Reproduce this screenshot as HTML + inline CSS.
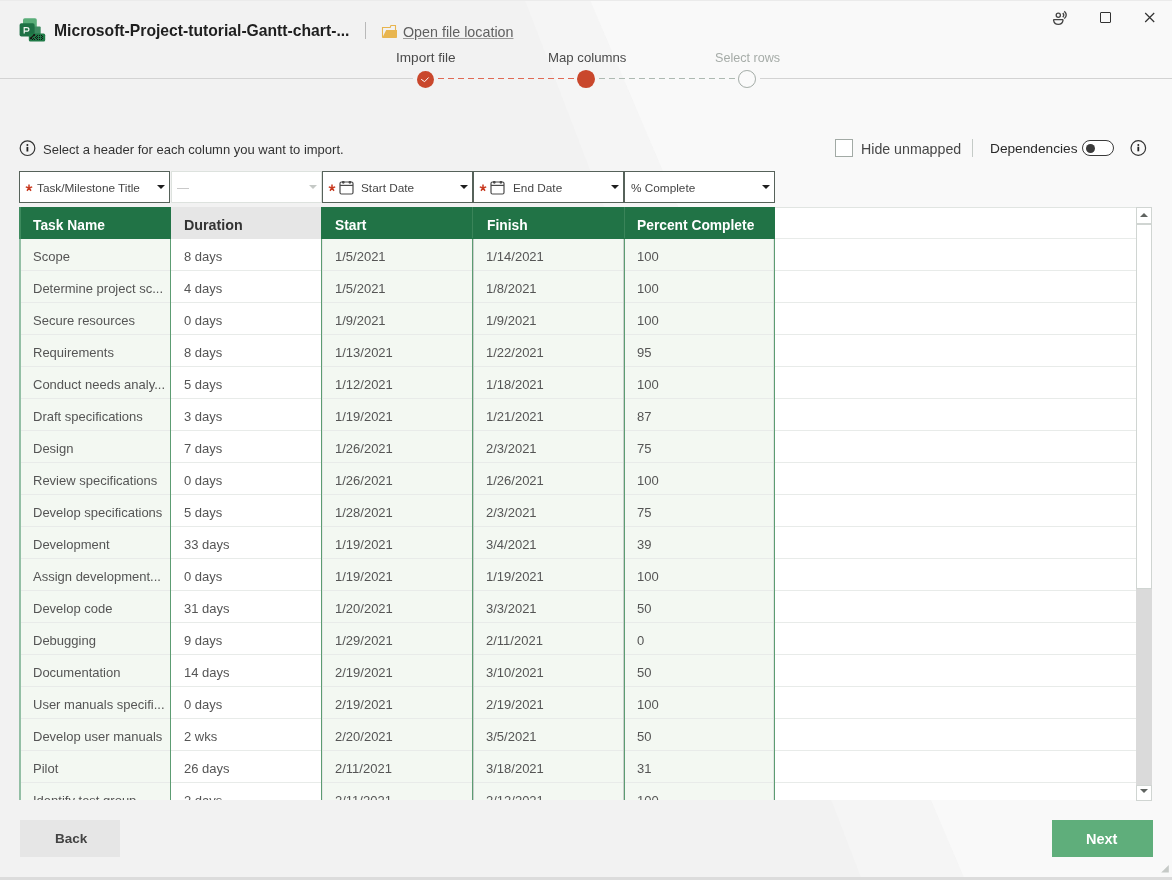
<!DOCTYPE html>
<html><head><meta charset="utf-8">
<style>
*{margin:0;padding:0;box-sizing:border-box}
html,body{width:1172px;height:880px;overflow:hidden}
body{position:relative;background:#f2f2f2;font-family:"Liberation Sans",sans-serif;color:#333}
.abs{position:absolute}
.tx{position:absolute;white-space:nowrap;line-height:1}
.step{position:absolute;font-size:13.2px;color:#4a4a4a;white-space:nowrap;line-height:1}
.dd{position:absolute;top:171px;height:32px;width:151px;background:#fff;border:1px solid #56625a}
.dd .lab{position:absolute;top:11px;font-size:11.8px;color:#454545;white-space:nowrap;line-height:1}
.dd .arr{position:absolute;left:136.5px;top:13px;width:0;height:0;border-left:4px solid transparent;border-right:4px solid transparent;border-top:4.5px solid #1e1e1e}
.ast{position:absolute;left:5px;top:11.5px}
#grid{position:absolute;left:19px;top:207px;width:1117px;height:593px;overflow:hidden;background:#fff}
.t{position:absolute;font-size:13px;color:#555;white-space:nowrap;line-height:1}
.rl{position:absolute;left:0;width:1118px;height:1px;background:#e8ebe9}
.hd{position:absolute;top:0;height:32px;font-size:13.8px;font-weight:bold;color:#fff;line-height:1;padding-top:12px;padding-left:14px;white-space:nowrap}
.vl{position:absolute;top:0;width:1px;height:594px;background:#5c9c72}
.tx,.t,.hd,.step,.lab{will-change:transform}
</style></head><body>
<svg class="abs" style="left:0;top:0" width="1172" height="880">
 <polygon points="525,0 590,0 965,880 862,880" fill="#f5f5f5"/>
 <polygon points="590,0 1172,0 1172,880 965,880" fill="#f9f9f9"/>
 <rect x="0" y="0" width="1172" height="1" fill="#ebebeb"/>
</svg>

<!-- app icon -->
<svg class="abs" style="left:19px;top:18px" width="27" height="25" viewBox="0 0 27 25">
 <rect x="4" y="0.2" width="13.8" height="12" rx="1.8" fill="#5aad79"/>
 <rect x="14.6" y="8.6" width="7.1" height="8" rx="1" fill="#3f8c62"/>
 <rect x="0.6" y="5.2" width="15" height="13.3" rx="1.8" fill="#1e7145"/>
 <path d="M5.2 15.6 V9.6 H7.6 Q9.9 9.6 9.9 11.4 Q9.9 13.2 7.6 13.2 H5.2" fill="none" stroke="#f2f7f3" stroke-width="1.2"/>
 <rect x="9.8" y="15.6" width="16.4" height="8" rx="1.6" fill="#1f7a47"/>
 <path d="M11.5 20.4 L15.2 16.9" stroke="#1a1010" stroke-width="1.3" fill="none"/>
 <rect x="14.4" y="16.1" width="1.7" height="1.7" fill="#1a1010"/>
 <rect x="11" y="19.6" width="1.6" height="1.6" fill="#1a1010"/>
 <g fill="#141414"><rect x="18.0" y="17.0" width="1" height="1"/><rect x="20.0" y="17.0" width="1" height="1"/><rect x="22.0" y="17.0" width="1" height="1"/><rect x="17.0" y="18.0" width="1" height="1"/><rect x="23.0" y="18.0" width="1" height="1"/><rect x="16.0" y="19.0" width="1" height="1"/><rect x="18.0" y="19.0" width="1" height="1"/><rect x="20.0" y="19.0" width="1" height="1"/><rect x="22.0" y="19.0" width="1" height="1"/><rect x="17.0" y="20.0" width="1" height="1"/><rect x="23.0" y="20.0" width="1" height="1"/><rect x="13.0" y="21.0" width="1" height="1"/><rect x="15.0" y="21.0" width="1" height="1"/><rect x="18.0" y="21.0" width="1" height="1"/><rect x="20.0" y="21.0" width="1" height="1"/><rect x="22.0" y="21.0" width="1" height="1"/><rect x="14.0" y="20.0" width="1" height="1"/><rect x="12.0" y="20.0" width="1" height="1"/></g>
</svg>
<div class="tx" style="left:54px;top:23px;font-size:15.7px;font-weight:bold;color:#1f1f1f">Microsoft-Project-tutorial-Gantt-chart-...</div>
<div class="abs" style="left:365px;top:22px;width:1px;height:17px;background:#b9b9b9"></div>
<!-- folder -->
<svg class="abs" style="left:376px;top:20px" width="28" height="22" viewBox="0 0 28 22">
 <path d="M6.5 17.5 V7.5 H14.2 L14.9 5.5 H19.5 V10.3" fill="none" stroke="#e8b54f" stroke-width="1.1"/>
 <path d="M10.2 10 H21 V17.6 L20.3 18 H6.2 Z" fill="#e8b54f"/>
</svg>
<div class="tx" style="left:403px;top:24.5px;font-size:14.3px;color:#606060;text-decoration:underline;text-decoration-color:#9a9a9a">Open file location</div>

<!-- window controls -->
<svg class="abs" style="left:1050px;top:8px" width="20" height="20" viewBox="0 0 20 20" fill="none" stroke="#444" stroke-width="1.3">
 <circle cx="8.3" cy="7.2" r="2.1"/>
 <path d="M3.9 11.7 H12.7 Q13.1 11.7 13 12.4 Q12.4 16.4 8.3 16.4 Q4.2 16.4 3.6 12.4 Q3.5 11.7 3.9 11.7 Z"/>
 <path d="M12.8 5 Q14.8 7.1 12.8 9.2"/><path d="M14.3 3.2 Q18.2 6.9 14.3 10.6"/>
</svg>
<div class="abs" style="left:1100px;top:12px;width:11px;height:11px;border:1.3px solid #333;border-radius:1px"></div>
<svg class="abs" style="left:1144px;top:12px" width="12" height="12" viewBox="0 0 12 12" stroke="#333" stroke-width="1.2"><path d="M1.2 1 L10.2 10 M10.2 1 L1.2 10"/></svg>

<!-- stepper -->
<div class="abs" style="left:0;top:78px;width:413px;height:1px;background:#d3d3d3"></div>
<div class="abs" style="left:760px;top:78px;width:412px;height:1px;background:#d3d3d3"></div>
<div class="step" style="left:396px;top:51px;font-size:13.6px">Import file</div>
<div class="step" style="left:548px;top:51px">Map columns</div>
<div class="step" style="left:715px;top:51.5px;font-size:12.6px;color:#a6aca8">Select rows</div>
<div class="abs" style="left:438px;top:78px;width:138px;height:1px;background:repeating-linear-gradient(90deg,#e06a55 0 6px,transparent 6px 10px)"></div>
<div class="abs" style="left:599px;top:78px;width:138px;height:1px;background:repeating-linear-gradient(90deg,#adb9b1 0 6px,transparent 6px 10px)"></div>
<div class="abs" style="left:416.5px;top:70.5px;width:17.5px;height:17.5px;border-radius:50%;background:#c9472c"></div>
<svg class="abs" style="left:416px;top:70px" width="18" height="18" viewBox="0 0 18 18"><path d="M5.2 9.3 L8.6 11.7 L12.6 7.5" stroke="#fff" stroke-width="1" fill="none"/></svg>
<div class="abs" style="left:577px;top:70.3px;width:17.8px;height:17.8px;border-radius:50%;background:#c9472c"></div>
<div class="abs" style="left:738px;top:70.3px;width:17.8px;height:17.8px;border-radius:50%;background:#fafafa;border:1.3px solid #a3aba6"></div>

<!-- info row -->
<svg class="abs" style="left:19px;top:140px" width="17" height="17" viewBox="0 0 17 17"><circle cx="8.5" cy="8.2" r="7.3" fill="none" stroke="#333" stroke-width="1.2"/><rect x="7.5" y="6.9" width="1.8" height="4.6" fill="#222"/><circle cx="8.4" cy="5.1" r="1" fill="#222"/></svg>
<div class="tx" style="left:43px;top:143px;font-size:13px;color:#333">Select a header for each column you want to import.</div>

<div class="abs" style="left:835px;top:139px;width:18px;height:18px;border:1px solid #a2aaa5;background:#fff"></div>
<div class="tx" style="left:861px;top:141.5px;font-size:14.2px;color:#464646">Hide unmapped</div>
<div class="abs" style="left:972px;top:139px;width:1px;height:18px;background:#c5cbc7"></div>
<div class="tx" style="left:990px;top:142px;font-size:13.7px;color:#2a2a2a">Dependencies</div>
<div class="abs" style="left:1082px;top:140px;width:32px;height:15.5px;border:1.3px solid #3a3a3a;border-radius:8px;background:#fff"></div>
<div class="abs" style="left:1085.7px;top:143.5px;width:9px;height:9px;border-radius:50%;background:#3a3a3a"></div>
<svg class="abs" style="left:1130px;top:140px" width="17" height="17" viewBox="0 0 17 17"><circle cx="8.3" cy="8" r="7.3" fill="none" stroke="#333" stroke-width="1.2"/><rect x="7.4" y="6.7" width="1.8" height="4.6" fill="#222"/><circle cx="8.3" cy="4.9" r="1" fill="#222"/></svg>

<!-- dropdowns -->
<div class="dd" style="left:19px"><svg class="ast" width="8" height="8" viewBox="0 0 8 8"><path d="M4 0.6 V4 M4 4 L0.8 2.9 M4 4 L7.2 2.9 M4 4 L2 6.8 M4 4 L6 6.8" stroke="#c8391f" stroke-width="1.5" fill="none"/></svg><span class="lab" style="left:17px">Task/Milestone Title</span><i class="arr"></i></div>
<div class="dd" style="left:171px;border-color:#dde2de"><span class="abs" style="left:5px;top:16px;width:12px;height:1px;background:#c9c9c9"></span><i class="arr" style="border-top-color:#c5c9c6"></i></div>
<div class="dd" style="left:322px"><svg class="ast" width="8" height="8" viewBox="0 0 8 8"><path d="M4 0.6 V4 M4 4 L0.8 2.9 M4 4 L7.2 2.9 M4 4 L2 6.8 M4 4 L6 6.8" stroke="#c8391f" stroke-width="1.5" fill="none"/></svg>
 <svg class="abs" style="left:16px;top:9px" width="15" height="14" viewBox="0 0 15 14" fill="none" stroke="#4a4a4a" stroke-width="1.2"><rect x="1" y="1" width="13" height="12" rx="1.5"/><path d="M1 4.4 H14"/><circle cx="4.3" cy="1.3" r=".8" fill="#4a4a4a"/><circle cx="10.9" cy="1.3" r=".8" fill="#4a4a4a"/></svg>
 <span class="lab" style="left:38px">Start Date</span><i class="arr"></i></div>
<div class="dd" style="left:473px"><svg class="ast" width="8" height="8" viewBox="0 0 8 8"><path d="M4 0.6 V4 M4 4 L0.8 2.9 M4 4 L7.2 2.9 M4 4 L2 6.8 M4 4 L6 6.8" stroke="#c8391f" stroke-width="1.5" fill="none"/></svg>
 <svg class="abs" style="left:16px;top:9px" width="15" height="14" viewBox="0 0 15 14" fill="none" stroke="#4a4a4a" stroke-width="1.2"><rect x="1" y="1" width="13" height="12" rx="1.5"/><path d="M1 4.4 H14"/><circle cx="4.3" cy="1.3" r=".8" fill="#4a4a4a"/><circle cx="10.9" cy="1.3" r=".8" fill="#4a4a4a"/></svg>
 <span class="lab" style="left:39px">End Date</span><i class="arr"></i></div>
<div class="dd" style="left:624px"><span class="lab" style="left:6px">% Complete</span><i class="arr"></i></div>

<!-- grid -->
<div id="grid">
 <div class="abs" style="left:0;top:0;width:1118px;height:1px;background:#e1e5e2"></div>
 <div class="abs" style="left:1px;top:0;width:151px;height:594px;background:#f3f8f2"></div>
 <div class="abs" style="left:303px;top:0;width:453px;height:594px;background:#f3f8f2"></div>
 <div class="rl" style="top:31px"></div>
<div class="rl" style="top:63px"></div>
<div class="rl" style="top:95px"></div>
<div class="rl" style="top:127px"></div>
<div class="rl" style="top:159px"></div>
<div class="rl" style="top:191px"></div>
<div class="rl" style="top:223px"></div>
<div class="rl" style="top:255px"></div>
<div class="rl" style="top:287px"></div>
<div class="rl" style="top:319px"></div>
<div class="rl" style="top:351px"></div>
<div class="rl" style="top:383px"></div>
<div class="rl" style="top:415px"></div>
<div class="rl" style="top:447px"></div>
<div class="rl" style="top:479px"></div>
<div class="rl" style="top:511px"></div>
<div class="rl" style="top:543px"></div>
<div class="rl" style="top:575px"></div>
<div class="rl" style="top:607px"></div>
 <div class="vl" style="left:303px;background:#e4e8e5"></div>
 <div class="vl" style="left:454px;background:#c9cfcb"></div>
 <div class="vl" style="left:604px;background:#c9cfcb"></div>
 <div class="vl" style="left:754px;background:#dfe4e0"></div>
 <div class="vl" style="left:0;width:2px;background:#93bfa5"></div>
 <div class="vl" style="left:151px"></div>
 <div class="vl" style="left:302px"></div>
 <div class="vl" style="left:453px"></div>
 <div class="vl" style="left:605px"></div>
 <div class="vl" style="left:755px"></div>
 <div class="hd" style="left:0;width:152px;background:#217346;padding-left:14px">Task Name</div>
 <div class="abs" style="left:0;top:0;width:2px;height:32px;background:#3f8b5f"></div>
 <div class="hd" style="left:152px;width:150px;background:#e6e6e6;color:#333;font-size:14.3px;padding-left:13px;padding-top:11px">Duration</div>
 <div class="hd" style="left:302px;width:454px;background:#217346;padding-left:14px">Start</div>
 <div class="abs" style="left:453px;top:0;width:1px;height:31px;background:#3a8459"></div>
 <div class="abs" style="left:605px;top:0;width:1px;height:31px;background:#3a8459"></div>
 <div class="hd" style="left:454px;width:150px;background:transparent">Finish</div>
 <div class="hd" style="left:605px;width:150px;background:transparent;padding-left:13px">Percent Complete</div>
</div>
<div id="cells" class="abs" style="left:0;top:0;width:1172px;height:800px;overflow:hidden">
<div class="t" style="left:33px;top:250.0px">Scope</div>
<div class="t" style="left:184px;top:250.0px">8 days</div>
<div class="t" style="left:335px;top:250.0px">1/5/2021</div>
<div class="t" style="left:486px;top:250.0px">1/14/2021</div>
<div class="t" style="left:637px;top:250.0px">100</div>
<div class="t" style="left:33px;top:282.0px">Determine project sc...</div>
<div class="t" style="left:184px;top:282.0px">4 days</div>
<div class="t" style="left:335px;top:282.0px">1/5/2021</div>
<div class="t" style="left:486px;top:282.0px">1/8/2021</div>
<div class="t" style="left:637px;top:282.0px">100</div>
<div class="t" style="left:33px;top:314.0px">Secure resources</div>
<div class="t" style="left:184px;top:314.0px">0 days</div>
<div class="t" style="left:335px;top:314.0px">1/9/2021</div>
<div class="t" style="left:486px;top:314.0px">1/9/2021</div>
<div class="t" style="left:637px;top:314.0px">100</div>
<div class="t" style="left:33px;top:346.0px">Requirements</div>
<div class="t" style="left:184px;top:346.0px">8 days</div>
<div class="t" style="left:335px;top:346.0px">1/13/2021</div>
<div class="t" style="left:486px;top:346.0px">1/22/2021</div>
<div class="t" style="left:637px;top:346.0px">95</div>
<div class="t" style="left:33px;top:378.0px">Conduct needs analy...</div>
<div class="t" style="left:184px;top:378.0px">5 days</div>
<div class="t" style="left:335px;top:378.0px">1/12/2021</div>
<div class="t" style="left:486px;top:378.0px">1/18/2021</div>
<div class="t" style="left:637px;top:378.0px">100</div>
<div class="t" style="left:33px;top:410.0px">Draft specifications</div>
<div class="t" style="left:184px;top:410.0px">3 days</div>
<div class="t" style="left:335px;top:410.0px">1/19/2021</div>
<div class="t" style="left:486px;top:410.0px">1/21/2021</div>
<div class="t" style="left:637px;top:410.0px">87</div>
<div class="t" style="left:33px;top:442.0px">Design</div>
<div class="t" style="left:184px;top:442.0px">7 days</div>
<div class="t" style="left:335px;top:442.0px">1/26/2021</div>
<div class="t" style="left:486px;top:442.0px">2/3/2021</div>
<div class="t" style="left:637px;top:442.0px">75</div>
<div class="t" style="left:33px;top:474.0px">Review specifications</div>
<div class="t" style="left:184px;top:474.0px">0 days</div>
<div class="t" style="left:335px;top:474.0px">1/26/2021</div>
<div class="t" style="left:486px;top:474.0px">1/26/2021</div>
<div class="t" style="left:637px;top:474.0px">100</div>
<div class="t" style="left:33px;top:506.0px">Develop specifications</div>
<div class="t" style="left:184px;top:506.0px">5 days</div>
<div class="t" style="left:335px;top:506.0px">1/28/2021</div>
<div class="t" style="left:486px;top:506.0px">2/3/2021</div>
<div class="t" style="left:637px;top:506.0px">75</div>
<div class="t" style="left:33px;top:538.0px">Development</div>
<div class="t" style="left:184px;top:538.0px">33 days</div>
<div class="t" style="left:335px;top:538.0px">1/19/2021</div>
<div class="t" style="left:486px;top:538.0px">3/4/2021</div>
<div class="t" style="left:637px;top:538.0px">39</div>
<div class="t" style="left:33px;top:570.0px">Assign development...</div>
<div class="t" style="left:184px;top:570.0px">0 days</div>
<div class="t" style="left:335px;top:570.0px">1/19/2021</div>
<div class="t" style="left:486px;top:570.0px">1/19/2021</div>
<div class="t" style="left:637px;top:570.0px">100</div>
<div class="t" style="left:33px;top:602.0px">Develop code</div>
<div class="t" style="left:184px;top:602.0px">31 days</div>
<div class="t" style="left:335px;top:602.0px">1/20/2021</div>
<div class="t" style="left:486px;top:602.0px">3/3/2021</div>
<div class="t" style="left:637px;top:602.0px">50</div>
<div class="t" style="left:33px;top:634.0px">Debugging</div>
<div class="t" style="left:184px;top:634.0px">9 days</div>
<div class="t" style="left:335px;top:634.0px">1/29/2021</div>
<div class="t" style="left:486px;top:634.0px">2/11/2021</div>
<div class="t" style="left:637px;top:634.0px">0</div>
<div class="t" style="left:33px;top:666.0px">Documentation</div>
<div class="t" style="left:184px;top:666.0px">14 days</div>
<div class="t" style="left:335px;top:666.0px">2/19/2021</div>
<div class="t" style="left:486px;top:666.0px">3/10/2021</div>
<div class="t" style="left:637px;top:666.0px">50</div>
<div class="t" style="left:33px;top:698.0px">User manuals specifi...</div>
<div class="t" style="left:184px;top:698.0px">0 days</div>
<div class="t" style="left:335px;top:698.0px">2/19/2021</div>
<div class="t" style="left:486px;top:698.0px">2/19/2021</div>
<div class="t" style="left:637px;top:698.0px">100</div>
<div class="t" style="left:33px;top:730.0px">Develop user manuals</div>
<div class="t" style="left:184px;top:730.0px">2 wks</div>
<div class="t" style="left:335px;top:730.0px">2/20/2021</div>
<div class="t" style="left:486px;top:730.0px">3/5/2021</div>
<div class="t" style="left:637px;top:730.0px">50</div>
<div class="t" style="left:33px;top:762.0px">Pilot</div>
<div class="t" style="left:184px;top:762.0px">26 days</div>
<div class="t" style="left:335px;top:762.0px">2/11/2021</div>
<div class="t" style="left:486px;top:762.0px">3/18/2021</div>
<div class="t" style="left:637px;top:762.0px">31</div>
<div class="t" style="left:33px;top:794.0px">Identify test group</div>
<div class="t" style="left:184px;top:794.0px">2 days</div>
<div class="t" style="left:335px;top:794.0px">2/11/2021</div>
<div class="t" style="left:486px;top:794.0px">2/12/2021</div>
<div class="t" style="left:637px;top:794.0px">100</div>
</div>

<!-- scrollbar -->
<div class="abs" style="left:1136px;top:207px;width:16px;height:593px;background:#dadada"></div>
<div class="abs" style="left:1136px;top:207px;width:16px;height:16.5px;background:#fff;border:1px solid #d0d5d2"></div>
<div class="abs" style="left:1139.8px;top:212.5px;width:0;height:0;border-left:4px solid transparent;border-right:4px solid transparent;border-bottom:4.5px solid #5f6360"></div>
<div class="abs" style="left:1136px;top:223.5px;width:16px;height:365px;background:#fff;border:1px solid #d0d5d2"></div>
<div class="abs" style="left:1136px;top:784.5px;width:16px;height:16px;background:#fff;border:1px solid #d0d5d2"></div>
<div class="abs" style="left:1139.8px;top:789.2px;width:0;height:0;border-left:4px solid transparent;border-right:4px solid transparent;border-top:4.5px solid #5f6360"></div>

<!-- buttons -->
<div class="abs" style="left:20px;top:820px;width:100px;height:37px;background:#e6e6e6"></div>
<div class="tx" style="left:55px;top:832px;font-size:13.5px;font-weight:bold;color:#444">Back</div>
<div class="abs" style="left:1052px;top:820px;width:101px;height:37px;background:#5fae7b"></div>
<div class="tx" style="left:1086px;top:832px;font-size:14.5px;font-weight:bold;color:#fff">Next</div>
<div class="abs" style="left:0;top:877px;width:1172px;height:3px;background:#dcdcdc"></div>
<svg class="abs" style="left:1160px;top:864px" width="9" height="9" viewBox="0 0 9 9"><path d="M8.8 1 L8.8 8.6 L1.2 8.6 Z" fill="#c6cac7"/></svg>
</body></html>
